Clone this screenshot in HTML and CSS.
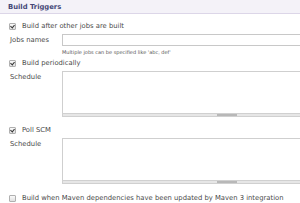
FILE: index.html
```html
<!DOCTYPE html>
<html lang="en">
<head>
    <meta charset="UTF-8" />
    <title>Build Triggers</title>
    <link rel="stylesheet" href="styles.css">
</head>
<body>
    <div class="section-header">Build Triggers</div>

    <div class="check-row first">
        <span class="cb checked"></span>
        <span>Build after other jobs are built</span>
    </div>
    <div class="field-row">
        <label class="field-label">Jobs names</label>
        <div class="field">
            <input type="text" class="text-input">
            <div class="hint">Multiple jobs can be specified like 'abc, def'</div>
        </div>
    </div>

    <div class="check-row periodic">
        <span class="cb checked"></span>
        <span>Build periodically</span>
    </div>
    <div class="field-row">
        <label class="field-label">Schedule</label>
        <div class="field">
            <textarea class="schedule"></textarea>
            <div class="handle"><span class="grip"></span></div>
        </div>
    </div>

    <div class="check-row poll">
        <span class="cb checked"></span>
        <span>Poll SCM</span>
    </div>
    <div class="field-row">
        <label class="field-label">Schedule</label>
        <div class="field">
            <textarea class="schedule"></textarea>
            <div class="handle"><span class="grip"></span></div>
        </div>
    </div>

    <div class="check-row maven">
        <span class="cb"></span>
        <span>Build when Maven dependencies have been updated by Maven 3 integration</span>
    </div>
</body>
</html>
```

FILE: styles.css
```css
* { box-sizing: border-box; }
body {
    margin: 0;
    background: #fff;
    font-family: 'DejaVu Sans', Verdana, sans-serif;
    font-size: 6.8px;
    color: #4a4a4a;
    overflow: hidden;
    width: 300px;
    height: 203px;
}
.section-header {
    height: 14px;
    padding: 3px 0 0 8px;
    line-height: 8px;
    font-weight: bold;
    font-size: 6.8px;
    color: #454877;
    background: #f4f2f8;
    border-bottom: 1px solid #dcd6e8;
}
.check-row {
    display: flex;
    align-items: center;
    height: 8px;
    padding-left: 9px;
    gap: 6px;
    white-space: nowrap;
}
.check-row.first { margin-top: 8px; }
.check-row.periodic { margin-top: 4px; }
.check-row.poll { margin-top: 9px; }
.check-row.maven { margin-top: 10px; }
.cb {
    width: 7px;
    height: 7px;
    border: 1px solid #b0b0b0;
    border-radius: 1px;
    background: linear-gradient(#fafafa, #e0e0e0);
    position: relative;
    flex-shrink: 0;
}
.cb.checked::after {
    content: "";
    position: absolute;
    left: 1px;
    top: 0;
    width: 2px;
    height: 3px;
    border-right: 1px solid #333;
    border-bottom: 1px solid #333;
    transform: rotate(40deg);
}
.field-row {
    display: flex;
    margin-top: 4px;
}
.field-label {
    width: 62px;
    flex-shrink: 0;
    padding: 3px 0 0 10px;
    line-height: 6px;
}
.field { flex: 1; min-width: 0; }
.text-input {
    display: block;
    width: 100%;
    height: 12px;
    margin: 0;
    border: 1px solid #c8c8c8;
    border-right: none;
    background: #fff;
}
.hint {
    margin-top: 4px;
    font-size: 5px;
    line-height: 5px;
    color: #555;
    white-space: nowrap;
}
.schedule {
    display: block;
    width: 100%;
    height: 42px;
    margin: 0;
    resize: none;
    border: 1px solid #cfcfcf;
    border-right: none;
    border-bottom: none;
    background: #fff;
}
.handle {
    height: 4px;
    background: #e6e6e6;
    border: 1px solid #d0d0d0;
    border-right: none;
    display: flex;
    align-items: center;
    padding-left: 154px;
}
.grip {
    width: 20px;
    height: 2px;
    background: #b8b8b8;
}
```
